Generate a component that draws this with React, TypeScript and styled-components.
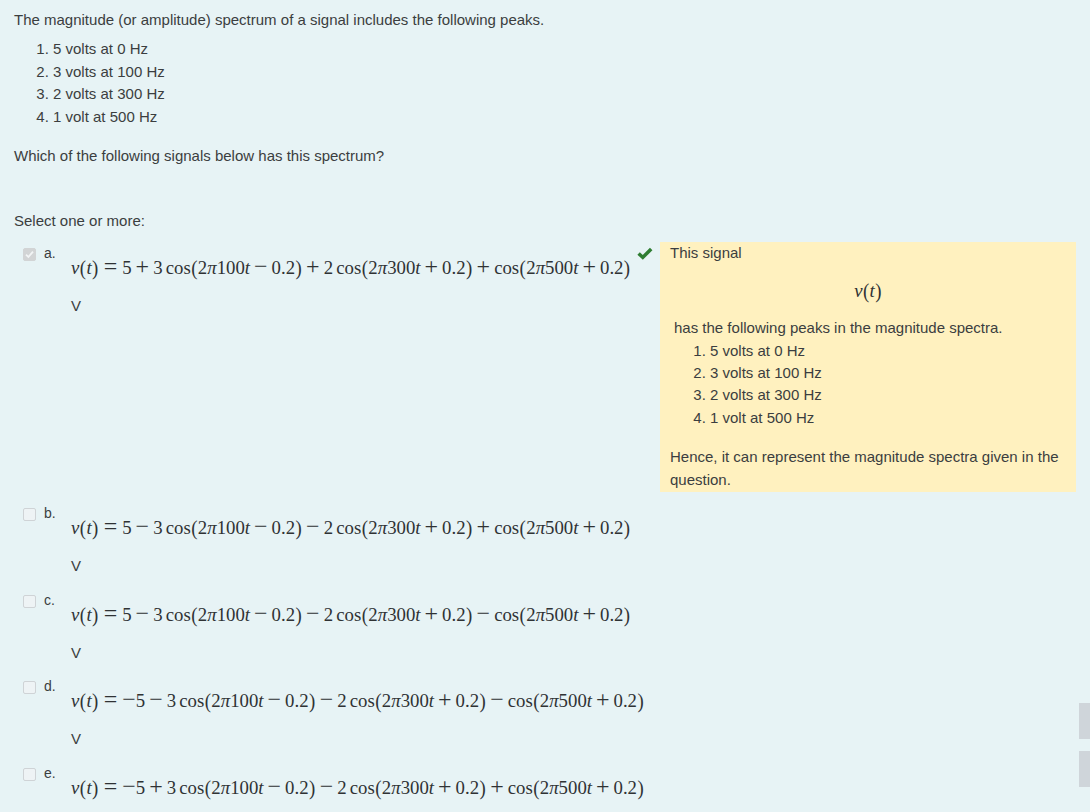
import React from "react";
import styled, { createGlobalStyle } from "styled-components";

const Global = createGlobalStyle`
  html, body { margin: 0; padding: 0; background: #e7f3f5; }
  body { font-family: "Liberation Sans", Arial, sans-serif; font-size: 15px; line-height: 22.4px; color: #3b3e40; }
`;

const Page = styled.div`
  position: relative;
  width: 1090px;
  height: 812px;
  overflow: hidden;
  box-sizing: border-box;
  padding: 9px 14px 0;
`;
const Para = styled.p<{ $after?: number }>`
  margin: 0 0 ${(p) => p.$after ?? 0}px;
`;
const Peaks = styled.ol<{ $indent: number; $before: number; $after: number }>`
  margin: ${(p) => p.$before}px 0 ${(p) => p.$after}px;
  padding: 0 0 0 ${(p) => p.$indent}px;
`;
const Options = styled.div`
  display: flex;
  flex-direction: column;
  margin-top: 10px;
  margin-left: 9px;
`;
const Row = styled.div<{ $h: number }>`
  display: flex;
  align-items: flex-start;
  height: ${(p) => p.$h}px;
`;
const Box = styled.span<{ $on?: boolean }>`
  flex: none;
  width: 13px;
  height: 13px;
  margin-top: 5px;
  box-sizing: border-box;
  border-radius: 2px;
  border: 1px solid ${(p) => (p.$on ? "#d2d4d5" : "#cfd3d6")};
  background: ${(p) => (p.$on ? "#d2d4d5" : "#eef3f5")};
  display: flex;
  align-items: center;
  justify-content: center;
`;
const Letter = styled.span`
  flex: none;
  width: 35px;
  margin-top: -1px;
  padding-left: 8px;
  box-sizing: border-box;
  font-size: 14px;
`;
const Body = styled.div`
  flex: none;
  width: 566px;
`;
const Formula = styled.div`
  font-family: "Liberation Serif", "Times New Roman", serif;
  font-size: 18.8px;
  line-height: 24px;
  margin-top: 13px;
  white-space: nowrap;
  color: #2f3234;
`;
const Unit = styled.div`
  margin-top: 15px;
`;
const V = styled.i`
  font-style: italic;
`;
const Fence = styled.span`
  display: inline-block;
  transform: scaleY(1.15);
  margin: 0 0.4px;
`;
const Op = styled.span<{ $gap: number }>`
  font-size: 24px;
  line-height: 0;
  margin: 0 ${(p) => p.$gap}px;
`;
const Fn = styled.span<{ $tight?: boolean }>`
  margin-left: ${(p) => (p.$tight ? 0 : 3.2)}px;
`;
const Tick = styled.svg`
  flex: none;
  width: 16px;
  height: 13px;
  margin: 4px 0 0 0;
`;
const Feedback = styled.aside`
  flex: none;
  width: 416px;
  height: 250px;
  margin-left: 7px;
  margin-top: -1px;
  box-sizing: border-box;
  padding: 0 10px;
  background: #fff1bf;
`;
const CenterMath = styled.div`
  font-family: "Liberation Serif", "Times New Roman", serif;
  font-size: 18.8px;
  line-height: 24px;
  text-align: center;
  margin: 15px 0 14px;
  color: #2f3234;
`;
const Indented = styled.p`
  margin: 0 0 0 4px;
`;
const Scroll = styled.div<{ $top: number }>`
  position: absolute;
  right: 0;
  top: ${(p) => p.$top}px;
  width: 11px;
  height: 36px;
  background: #cfd5da;
`;

const Vt = () => (
  <>
    <V>v</V>
    <Fence>(</Fence>
    <V>t</V>
    <Fence>)</Fence>
  </>
);

const Cos = ({ f, s, tight }: { f: string; s: string; tight?: boolean }) => (
  <>
    <Fn $tight={tight}>cos</Fn>
    <Fence>(</Fence>2<V>π</V>
    {f}
    <V>t</V>
    <Op $gap={4}>{s}</Op>0.2
    <Fence>)</Fence>
  </>
);

type Terms = { lead: string; a: string; b: string; c: string; d: string };

const Expression = ({ lead, a, b, c, d }: Terms) => (
  <Formula>
    <Vt />
    <Op $gap={5}>=</Op>
    {lead === "-" && <Op $gap={0}>−</Op>}5
    <Op $gap={4}>{a}</Op>3<Cos f="100" s={b} />
    <Op $gap={4}>{c}</Op>2<Cos f="300" s="+" />
    <Op $gap={4}>{d}</Op>
    <Cos f="500" s="+" tight />
  </Formula>
);

const peaks = ["5 volts at 0 Hz", "3 volts at 100 Hz", "2 volts at 300 Hz", "1 volt at 500 Hz"];

const PeakList = ({ indent, before, after }: { indent: number; before: number; after: number }) => (
  <Peaks $indent={indent} $before={before} $after={after}>
    {peaks.map((t) => (
      <li key={t}>{t}</li>
    ))}
  </Peaks>
);

const Choice = ({ letter, height, on, terms, unit = true, children }: {
  letter: string;
  height: number;
  on?: boolean;
  terms: Terms;
  unit?: boolean;
  children?: React.ReactNode;
}) => (
  <Row $h={height}>
    <Box $on={on}>
      {on && (
        <svg width="9" height="9" viewBox="0 0 9 9">
          <path d="M1 4.6 L3.4 7 L8 1.6" fill="none" stroke="#f2f4f5" strokeWidth="1.8" />
        </svg>
      )}
    </Box>
    <Letter>{letter}.</Letter>
    <Body>
      <Expression {...terms} />
      {unit && <Unit>V</Unit>}
    </Body>
    {children}
  </Row>
);

export default function App() {
  return (
    <Page>
      <Global />
      <Para>The magnitude (or amplitude) spectrum of a signal includes the following peaks.</Para>
      <PeakList indent={39} before={7} after={17} />
      <Para $after={43}>Which of the following signals below has this spectrum?</Para>
      <Para>Select one or more:</Para>
      <Options>
        <Choice letter="a" height={260} on terms={{ lead: "", a: "+", b: "−", c: "+", d: "+" }}>
          <Tick viewBox="0 0 16 13">
            <path d="M1.6 6.4 L5.8 10.4 L14.2 2" fill="none" stroke="#2f7d32" strokeWidth="3.5" />
          </Tick>
          <Feedback>
            <Para>This signal</Para>
            <CenterMath>
              <Vt />
            </CenterMath>
            <Indented>has the following peaks in the magnitude spectra.</Indented>
            <PeakList indent={40} before={0} after={17} />
            <Para>Hence, it can represent the magnitude spectra given in the question.</Para>
          </Feedback>
        </Choice>
        <Choice letter="b" height={87} terms={{ lead: "", a: "−", b: "−", c: "−", d: "+" }} />
        <Choice letter="c" height={86} terms={{ lead: "", a: "−", b: "−", c: "−", d: "−" }} />
        <Choice letter="d" height={87} terms={{ lead: "-", a: "−", b: "−", c: "−", d: "−" }} />
        <Choice letter="e" height={50} unit={false} terms={{ lead: "-", a: "+", b: "−", c: "−", d: "+" }} />
      </Options>
      <Scroll $top={703} />
      <Scroll $top={751} />
    </Page>
  );
}
